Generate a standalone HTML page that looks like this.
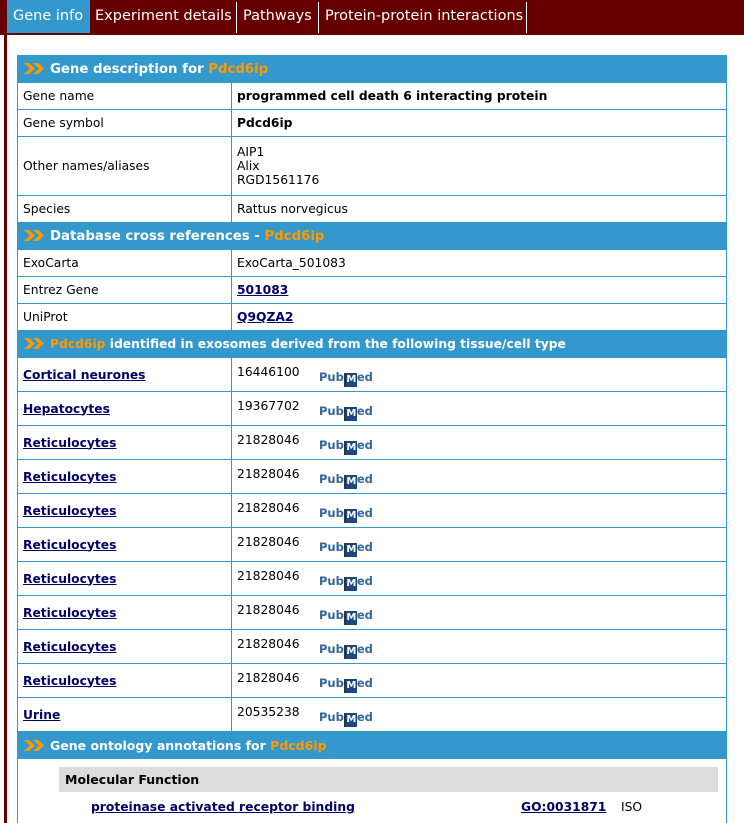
<!DOCTYPE html>
<html><head><meta charset="utf-8"><style>
html,body{margin:0;width:744px;height:823px;overflow:hidden}
body{background:#fff;font-family:"DejaVu Sans",Verdana,sans-serif;font-size:12.3px;color:#000;position:relative}
.bar{position:absolute;left:0;top:0;width:744px;height:35px;background:#660000}
.stripe{position:absolute;left:4px;top:35px;width:3px;height:788px;background:#660000}
.tab{position:absolute;top:0;height:33px;line-height:33px;color:#fff;font-size:14.5px;padding:0 6px;box-sizing:border-box}
.sep{position:absolute;top:2px;width:1px;height:31px;background:#fff}
table{position:absolute;left:17px;top:55px;width:710px;border-collapse:collapse}
td{border:1px solid #3399cc;padding:0 5px;vertical-align:middle}
td.l{width:203px}
tr.h td{background:#3399cc;color:#fff;font-weight:bold;height:26px;font-size:13.3px}
.o{color:#ff9900}
.ar{display:inline-block;vertical-align:-2px;margin-right:5px}
tr.r td{height:26px}
a{color:#000066;font-weight:bold;text-decoration:underline}
tr.t td{height:33px;vertical-align:top}
tr.t td.l{vertical-align:middle}
.num{display:inline-block;margin-top:7px;width:82px}
.pm{display:inline-block;font-weight:bold;color:#336699;font-size:11.5px;margin-top:12px;vertical-align:top}
.pm i{display:inline-block;width:11px;height:14px;background:#1a4a80;vertical-align:-1px;font-style:normal;color:#fff;font-size:10px;line-height:14px;text-align:center;border-left:2px solid #333}
.mf{position:absolute;left:59px;top:767px;width:659px;height:25px;background:#dcdcdc;line-height:25px;font-weight:bold;box-sizing:border-box;padding-left:6px;font-size:12.5px}
</style></head><body>
<div class="bar"></div><div class="stripe"></div>
<div class="tab" style="left:7px;width:83px;background:#3399cc">Gene info</div>
<div class="tab" style="left:89px">Experiment details</div>
<div class="sep" style="left:236px"></div>
<div class="tab" style="left:237px">Pathways</div>
<div class="sep" style="left:318px"></div>
<div class="tab" style="left:319px">Protein-protein interactions</div>
<div class="sep" style="left:526px"></div>
<table>
<tr class="h"><td colspan="2"><svg class="ar" width="22" height="13"><path d="M1 1h5l6 5.5-6 5.5H1l6-5.5z M10 1h5l6 5.5-6 5.5h-5l6-5.5z" fill="#ff9900"/></svg>Gene description for <span class="o">Pdcd6ip</span></td></tr>
<tr class="r"><td class="l">Gene name</td><td><b>programmed cell death 6 interacting protein</b></td></tr>
<tr class="r"><td class="l">Gene symbol</td><td><b>Pdcd6ip</b></td></tr>
<tr><td class="l" style="height:58px">Other names/aliases</td><td>AIP1<br>Alix<br>RGD1561176</td></tr>
<tr class="r"><td class="l">Species</td><td>Rattus norvegicus</td></tr>
<tr class="h"><td colspan="2"><svg class="ar" width="22" height="13"><path d="M1 1h5l6 5.5-6 5.5H1l6-5.5z M10 1h5l6 5.5-6 5.5h-5l6-5.5z" fill="#ff9900"/></svg>Database cross references - <span class="o">Pdcd6ip</span></td></tr>
<tr class="r"><td class="l">ExoCarta</td><td>ExoCarta_501083</td></tr>
<tr class="r"><td class="l">Entrez Gene</td><td><a>501083</a></td></tr>
<tr class="r"><td class="l">UniProt</td><td><a>Q9QZA2</a></td></tr>
<tr class="h"><td colspan="2" style="font-size:12.3px"><svg class="ar" width="22" height="13"><path d="M1 1h5l6 5.5-6 5.5H1l6-5.5z M10 1h5l6 5.5-6 5.5h-5l6-5.5z" fill="#ff9900"/></svg><span class="o">Pdcd6ip</span> identified in exosomes derived from the following tissue/cell type</td></tr>
<tr class="t"><td class="l"><a>Cortical neurones</a></td><td><span class="num">16446100</span><span class="pm">Pub<i>M</i>ed</span></td></tr>
<tr class="t"><td class="l"><a>Hepatocytes</a></td><td><span class="num">19367702</span><span class="pm">Pub<i>M</i>ed</span></td></tr>
<tr class="t"><td class="l"><a>Reticulocytes</a></td><td><span class="num">21828046</span><span class="pm">Pub<i>M</i>ed</span></td></tr>
<tr class="t"><td class="l"><a>Reticulocytes</a></td><td><span class="num">21828046</span><span class="pm">Pub<i>M</i>ed</span></td></tr>
<tr class="t"><td class="l"><a>Reticulocytes</a></td><td><span class="num">21828046</span><span class="pm">Pub<i>M</i>ed</span></td></tr>
<tr class="t"><td class="l"><a>Reticulocytes</a></td><td><span class="num">21828046</span><span class="pm">Pub<i>M</i>ed</span></td></tr>
<tr class="t"><td class="l"><a>Reticulocytes</a></td><td><span class="num">21828046</span><span class="pm">Pub<i>M</i>ed</span></td></tr>
<tr class="t"><td class="l"><a>Reticulocytes</a></td><td><span class="num">21828046</span><span class="pm">Pub<i>M</i>ed</span></td></tr>
<tr class="t"><td class="l"><a>Reticulocytes</a></td><td><span class="num">21828046</span><span class="pm">Pub<i>M</i>ed</span></td></tr>
<tr class="t"><td class="l"><a>Reticulocytes</a></td><td><span class="num">21828046</span><span class="pm">Pub<i>M</i>ed</span></td></tr>
<tr class="t"><td class="l"><a>Urine</a></td><td><span class="num">20535238</span><span class="pm">Pub<i>M</i>ed</span></td></tr>
<tr class="h"><td colspan="2" style="font-size:12.5px"><svg class="ar" width="22" height="13"><path d="M1 1h5l6 5.5-6 5.5H1l6-5.5z M10 1h5l6 5.5-6 5.5h-5l6-5.5z" fill="#ff9900"/></svg>Gene ontology annotations for <span class="o">Pdcd6ip</span></td></tr>
<tr><td colspan="2" style="height:80px;border-bottom:none"></td></tr>
</table>
<div class="mf">Molecular Function</div>
<a style="position:absolute;left:91px;top:800px">proteinase activated receptor binding</a>
<a style="position:absolute;left:521px;top:800px">GO:0031871</a>
<span style="position:absolute;left:621px;top:800px">ISO</span>
</body></html>
